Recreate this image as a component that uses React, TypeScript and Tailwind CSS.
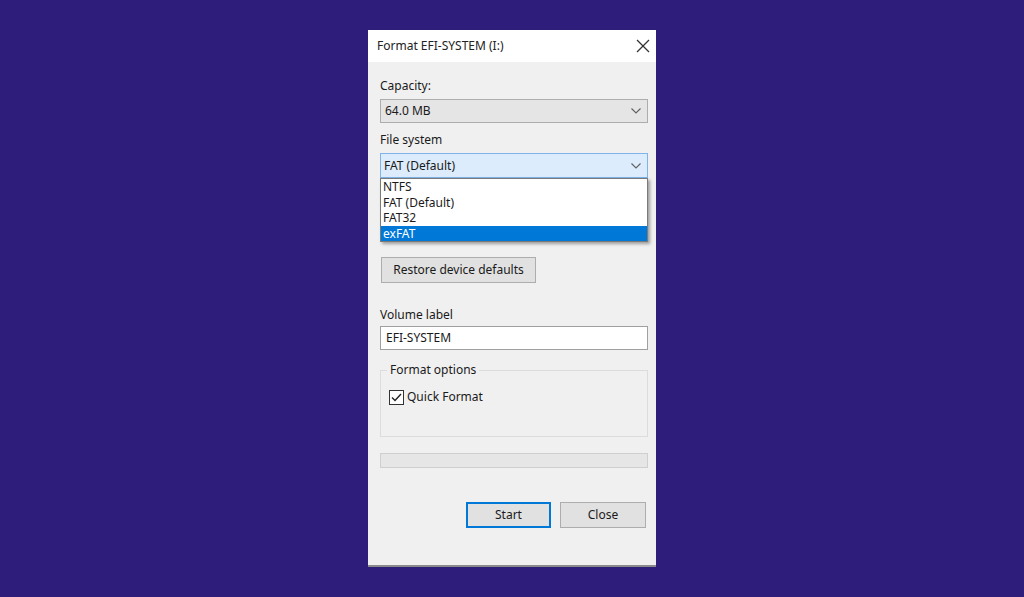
const FONT = { fontFamily: '"Noto Sans", "Open Sans", Arial, sans-serif' };

function Chevron() {
  return (
    <svg width="10" height="6" viewBox="0 0 10 6" fill="none" stroke="#606060" strokeWidth={1.1}>
      <polyline points="0.5 0.5 5 5 9.5 0.5" />
    </svg>
  );
}

export default function App() {
  const options = ["NTFS", "FAT (Default)", "FAT32", "exFAT"];

  return (
    <div className="flex h-[597px] w-full justify-center bg-[#2e1d7b] pt-[30px]" style={FONT}>
      <div className="flex h-[537px] w-[288px] flex-col border-b-2 border-[#8a8a8a] bg-[#f0f0f0] text-[12px] text-[#1a1a1a]">
        {/* Title bar */}
        <div className="flex h-[32px] shrink-0 items-center justify-between bg-white pl-[9px] pr-[6px]">
          <span className="text-[12px] text-[#222]">Format EFI-SYSTEM (I:)</span>
          <svg width="14" height="14" viewBox="0 0 14 14" stroke="#333" strokeWidth={1.3}>
            <line x1="1" y1="1" x2="13" y2="13" />
            <line x1="13" y1="1" x2="1" y2="13" />
          </svg>
        </div>

        <div className="flex flex-col pl-[12px] pr-[8px]">
          {/* Capacity */}
          <div className="mt-[16px] h-[16px] leading-[16px]">Capacity:</div>
          <div className="mt-[5px] flex h-[24px] items-center justify-between border border-[#adadad] bg-[#e5e5e5] pl-[4px] pr-[6px]">
            <span>64.0 MB</span>
            <Chevron />
          </div>

          {/* File system */}
          <div className="mt-[9px] h-[16px] leading-[16px]">File system</div>
          <div className="relative mt-[5px]">
            <div className="flex h-[25px] items-center justify-between border border-[#7eb4ea] bg-[#dcecfc] pl-[3px] pr-[6px]">
              <span>FAT (Default)</span>
              <Chevron />
            </div>
            <ul className="absolute left-0 right-0 top-full z-10 border border-[#7a7a7a] bg-white shadow-[2px_2px_3px_rgba(0,0,0,0.35)]">
              {options.map((o) => (
                <li
                  key={o}
                  className={`h-[15.5px] pl-[2px] leading-[15px] ${o === "exFAT" ? "bg-[#0078d7] text-white" : ""}`}
                >
                  {o}
                </li>
              ))}
            </ul>
          </div>

          {/* Restore defaults */}
          <div className="mt-[79px] flex">
            <button className="ml-px h-[26px] w-[155px] border border-[#adadad] bg-[#e1e1e1] text-[12px]">
              Restore device defaults
            </button>
          </div>

          {/* Volume label */}
          <div className="mt-[24px] h-[16px] leading-[16px]">Volume label</div>
          <div className="mt-[3px] flex h-[24px] items-center border border-[#a0a0a0] bg-white pl-[5px]">
            EFI-SYSTEM
          </div>

          {/* Format options */}
          <div className="relative mt-[20px] h-[67px] border border-[#dcdcdc]">
            <span className="absolute -top-[9px] left-[6px] bg-[#f0f0f0] px-[3px] leading-[16px]">Format options</span>
            <div className="ml-[8px] mt-[17px] flex items-center gap-[3px]">
              <span className="flex h-[15px] w-[15px] items-center justify-center border border-[#333] bg-white">
                <svg width="11" height="9" viewBox="0 0 11 9" fill="none" stroke="#222" strokeWidth={1.4}>
                  <polyline points="1 4.5 4 7.5 10 1" />
                </svg>
              </span>
              <span>Quick Format</span>
            </div>
          </div>

          {/* Progress */}
          <div className="mt-[16px] h-[15px] border border-[#cfcfcf] bg-[#e6e6e6]" />

          {/* Buttons */}
          <div className="mt-[34px] flex justify-end gap-[9px] pr-[2px]">
            <button className="h-[26px] w-[85px] border-2 border-[#0078d7] bg-[#e1e1e1] text-[12px]">Start</button>
            <button className="h-[26px] w-[86px] border border-[#adadad] bg-[#e1e1e1] text-[12px]">Close</button>
          </div>
        </div>
      </div>
    </div>
  );
}
